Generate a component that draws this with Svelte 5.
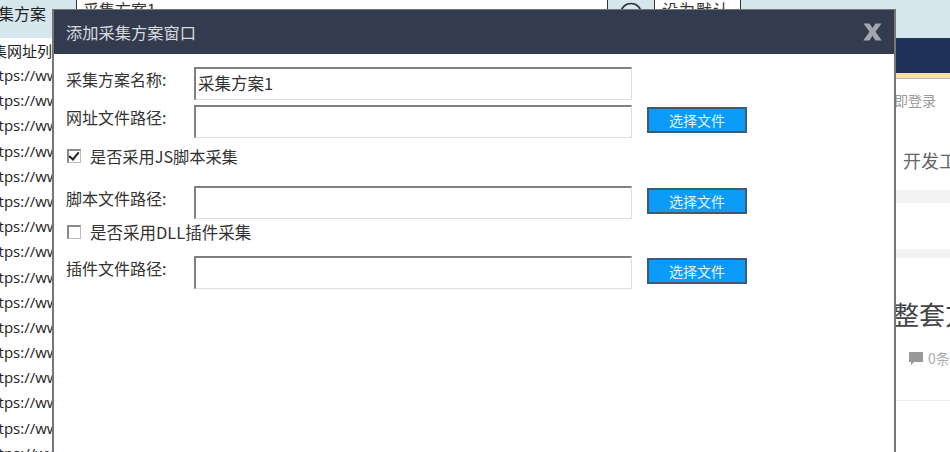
<script>
	const urls = Array.from({ length: 16 }, () => 'https://www.example.com/');
	const fields = [
		{ label: '采集方案名称:', value: '采集方案1', picker: false, cls: 'first' },
		{ label: '网址文件路径:', value: '', picker: true, cls: 'second' },
		{ check: '是否采用JS脚本采集', checked: true, cls: 'check-js' },
		{ label: '脚本文件路径:', value: '', picker: true, cls: 'third' },
		{ check: '是否采用DLL插件采集', checked: false, cls: 'check-dll' },
		{ label: '插件文件路径:', value: '', picker: true, cls: 'fourth' }
	];
</script>

<div class="page">
	<div class="toolbar">
		<div class="plan-tab"><span>采集方案</span></div>
		<div class="plan-input">采集方案1</div>
		<div class="search">
			<svg width="26" height="26" viewBox="0 0 26 26"><circle cx="13" cy="14" r="10.5" fill="none" stroke="#333" stroke-width="1.6" /></svg>
		</div>
		<div class="default-btn">设为默认</div>
	</div>

	<div class="content">
		<ul class="url-list">
			<li class="list-head">采集网址列表</li>
			{#each urls as url}
				<li>{url}</li>
			{/each}
		</ul>
		<div class="site">
			<div class="navy"></div>
			<div class="gold"></div>
			<div class="site-body">
				<div class="login">立即登录</div>
				<div class="dev">开发工具</div>
				<div class="band one"></div>
				<div class="band two"></div>
				<div class="headline">整套方案</div>
				<div class="meta">
					<svg width="16" height="15" viewBox="0 0 16 15"><path d="M1 1h14v10H6l-3 3v-3H1z" fill="#999" /></svg>
					<span>0条评论</span>
				</div>
				<div class="rule"></div>
			</div>
		</div>
	</div>

	<div class="modal">
		<header>
			<span>添加采集方案窗口</span>
			<svg width="19" height="18" viewBox="0 0 19 18"><path d="M0.5 0.5h6l3 4.5 3-4.5h6l-6 8.3 6.2 8.7h-6.2l-3-4.7-3 4.7H0.3l6.2-8.7z" fill="#a3a6ae" /></svg>
		</header>
		<form>
			{#each fields as f}
				{#if f.check}
					<label class="check {f.cls}">
						<input type="checkbox" checked={f.checked} />
						<span>{f.check}</span>
					</label>
				{:else}
					<div class="row {f.cls}">
						<span class="name">{f.label}</span>
						<input class="box" type="text" value={f.value} />
						{#if f.picker}
							<button type="button">选择文件</button>
						{/if}
					</div>
				{/if}
			{/each}
		</form>
	</div>
</div>

<style>
	:global(body) {
		margin: 0;
		background: #fff;
	}

	.page {
		position: relative;
		width: 950px;
		height: 452px;
		overflow: hidden;
		font-family: "Noto Sans CJK SC", "Open Sans", sans-serif;
		color: #333;
	}

	.toolbar {
		display: flex;
		height: 38px;
		background: #d5e6ec;
		font-size: 16px;
	}

	.plan-tab {
		width: 76px;
		overflow: hidden;
		white-space: nowrap;
		border-right: 1px solid #333;
	}

	.plan-tab span {
		display: block;
		margin: 1px 0 0 -18px;
		color: #222;
	}

	.plan-input {
		width: 524px;
		padding: 0 0 0 6px;
		background: #fff;
		border-right: 1px solid #333;
		line-height: 19px;
		color: #333;
	}

	.search {
		width: 46px;
		border-right: 1px solid #333;
		display: flex;
		justify-content: center;
		align-items: flex-start;
	}

	.default-btn {
		width: 72px;
		padding: 0 6px 0 7px;
		background: #fff;
		border-right: 1px solid #333;
		line-height: 19px;
		letter-spacing: 1px;
		white-space: nowrap;
		overflow: hidden;
	}

	.content {
		display: flex;
		height: 414px;
	}

	.url-list {
		flex: none;
		list-style: none;
		margin: 0;
		padding: 0;
		width: 76px;
		overflow: hidden;
		white-space: nowrap;
		font-family: "Open Sans", sans-serif;
		font-size: 15px;
		color: #222;
	}

	.url-list li {
		height: 25.2px;
		line-height: 25px;
		margin-left: -16px;
	}

	.url-list .list-head {
		font-family: "Noto Sans CJK SC", sans-serif;
		height: 25px;
		margin: 0 0 0 -23px;
	}

	.site {
		flex: 1;
		min-width: 0;
	}

	.navy {
		height: 35px;
		background: #20315a;
	}

	.gold {
		height: 5px;
		background: #f8dfa2;
		border-bottom: 1px solid #b5b5b5;
	}

	.site-body {
		white-space: nowrap;
		overflow: hidden;
		height: 373px;
	}

	/* everything here sits mostly behind the modal, only the tail shows */
	.login {
		margin: 10px 0 0 804px;
		font-size: 14px;
		line-height: 22px;
		color: #999;
	}

	.dev {
		margin: 36px 0 0 827px;
		font-size: 18px;
		line-height: 26px;
		color: #666;
	}

	.band {
		background: #f3f3f3;
	}

	.band.one {
		height: 13px;
		margin-top: 17px;
	}

	.band.two {
		height: 9px;
		margin-top: 46px;
	}

	.headline {
		margin: 38px 0 0 817px;
		font-size: 26px;
		line-height: 36px;
		color: #444;
	}

	.meta {
		display: flex;
		align-items: center;
		gap: 4px;
		margin: 16px 0 0 832px;
		font-size: 14px;
		line-height: 20px;
		color: #aaa;
	}

	.meta svg {
		flex: none;
	}

	.meta span {
		flex: none;
	}

	.rule {
		height: 1px;
		margin-top: 32px;
		background: #eee;
	}

	.modal {
		position: absolute;
		left: 52px;
		top: 9px;
		width: 840px;
		height: 460px;
		background: #fff;
		border: 1px solid #777;
		border-width: 1px 2px;
	}

	header {
		display: flex;
		align-items: center;
		justify-content: space-between;
		height: 44px;
		padding: 0 12px 0 12px;
		background: #333b4f;
		color: #d8dade;
		font-size: 16.25px;
	}

	form {
		display: flex;
		flex-direction: column;
		padding: 13px 0 0 12px;
	}

	.row {
		display: flex;
		align-items: flex-start;
		font-size: 16px;
		color: #333;
	}

	.name {
		width: 128px;
		line-height: 25px;
	}

	.box {
		box-sizing: border-box;
		width: 438px;
		height: 33px;
		margin: 0;
		padding: 0 2px 2px;
		border: 1px solid #ddd;
		border-top: 2px solid #808080;
		border-left: 2px solid #808080;
		outline: none;
		font: inherit;
		font-size: 16.5px;
		color: #333;
		background: #fff;
	}

	button {
		width: 100px;
		height: 26px;
		margin: 2px 0 0 15px;
		padding: 0;
		box-sizing: border-box;
		border: 2px solid #3f5b70;
		background: #0a9bfb;
		color: #e6f5ff;
		font: inherit;
		font-size: 14px;
		line-height: 20px;
	}

	.second {
		margin-top: 5px;
	}

	.third {
		margin-top: 19px;
	}

	.fourth {
		margin-top: 13px;
	}

	.check {
		display: flex;
		align-items: center;
		height: 22px;
		font-size: 16.5px;
		color: #333;
	}

	.check-js {
		margin-top: 7px;
		font-size: 16.2px;
	}

	.check-dll {
		margin-top: 2px;
	}

	.check input {
		appearance: none;
		box-sizing: border-box;
		width: 14px;
		height: 14px;
		margin: 0 9px 0 1px;
		border: 1px solid #bbb;
		border-top: 2px solid #8a8a8a;
		border-left: 2px solid #8a8a8a;
		background: #fff;
		position: relative;
	}

	.check input:checked::after {
		content: "";
		position: absolute;
		left: 2px;
		top: -1px;
		width: 4px;
		height: 8px;
		border: solid #222;
		border-width: 0 2px 2px 0;
		transform: rotate(40deg);
	}
</style>
